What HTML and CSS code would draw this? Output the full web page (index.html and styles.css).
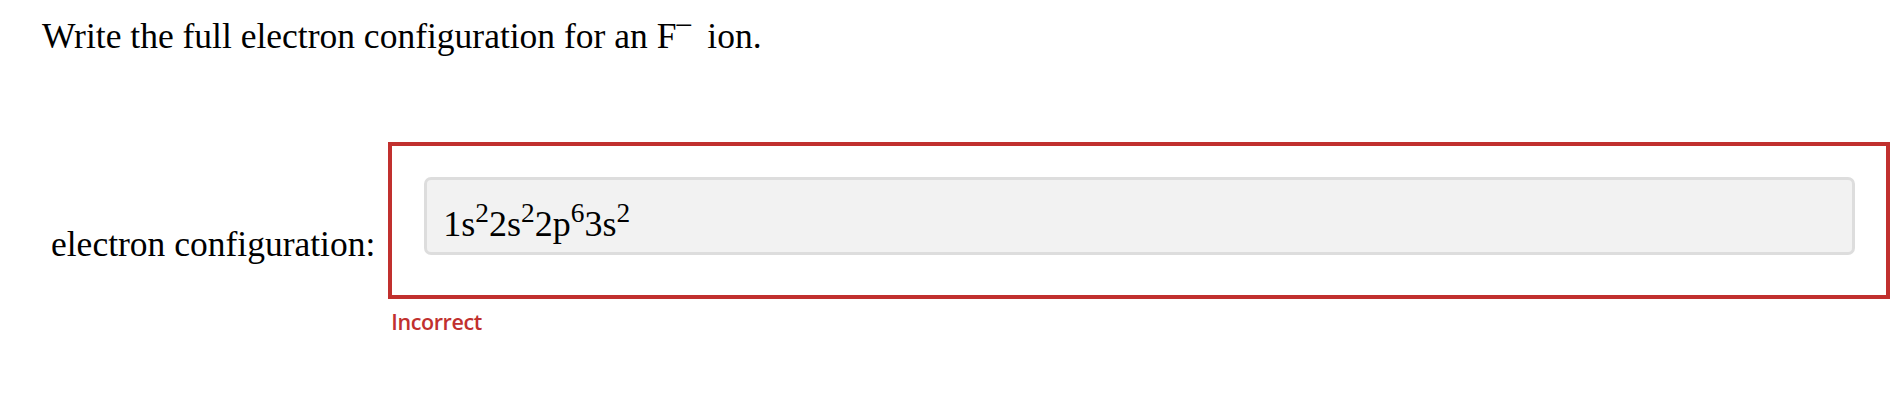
FILE: index.html
```html
<!DOCTYPE html>
<html>
<head>
<meta charset="utf-8">
<link rel="stylesheet" href="styles.css">
</head>
<body>
<div class="page">
  <p class="question">Write the full electron configuration for an F<sup class="charge">&minus;</sup> ion.</p>
  <div class="row">
    <div class="label">electron configuration:</div>
    <div class="answer-wrap">
      <div class="answer-box">
        <div class="field">1s<sup>2</sup>2s<sup>2</sup>2p<sup>6</sup>3s<sup>2</sup></div>
      </div>
      <div class="feedback">Incorrect</div>
    </div>
  </div>
</div>
</body>
</html>
```

FILE: styles.css
```css
html, body {
  margin: 0;
  padding: 0;
  background: #ffffff;
}
.page {
  padding: 18px 12px 0 42px;
  font-family: "Liberation Serif", "Times New Roman", serif;
  color: #000;
}
.question {
  margin: 0;
  font-size: 35.5px;
  line-height: 36px;
}
.charge {
  font-size: 0.9em;
  vertical-align: 12px;
  line-height: 0;
  margin-left: -2px;
  margin-right: 6px;
}
.row {
  display: flex;
  align-items: flex-start;
  margin-top: 88px;
}
.label {
  font-size: 35.5px;
  line-height: 36px;
  padding: 84px 13px 0 9px;
}
.answer-wrap {
  flex: 1;
  display: flex;
  flex-direction: column;
}
.answer-box {
  border: 4px solid #c1302e;
  padding: 31px 31px 40px 32px;
}
.field {
  height: 78px;
  box-sizing: border-box;
  background: #f2f2f2;
  border: 3px solid #dddddd;
  border-radius: 7px;
  padding: 14px 16px 0 16px;
  font-size: 36px;
  line-height: 60px;
}
.field sup {
  font-size: 0.76em;
  line-height: 0;
  vertical-align: 0.5em;
}
.feedback {
  font-family: "Open Sans", "Liberation Sans", sans-serif;
  font-weight: 600;
  color: #c1302e;
  font-size: 21.5px;
  letter-spacing: -0.4px;
  margin-top: 8px;
  padding-left: 3px;
}
```
